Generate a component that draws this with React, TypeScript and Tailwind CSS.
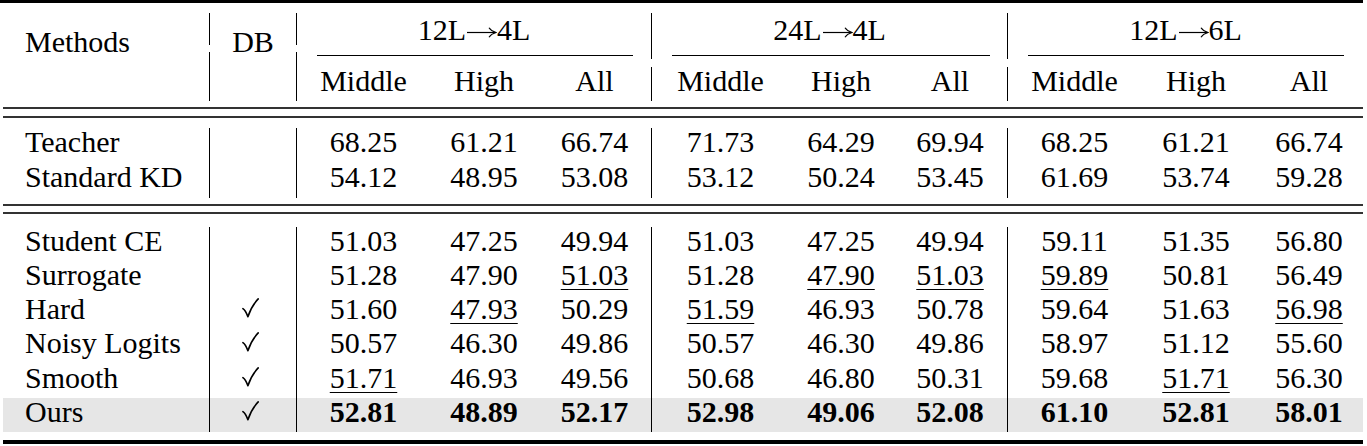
import React from "react"
import clsx from "clsx"

const cols =
  "grid grid-cols-[206px_87px_134px_108px_113px_138px_104px_114px_134px_110px_112px]"

const groups = [
  ["12L", "4L"],
  ["24L", "4L"],
  ["12L", "6L"],
]
const subs = ["Middle", "High", "All"]

// "_" prefix = underlined (second best)
const top = [
  { name: "Teacher", vals: ["68.25", "61.21", "66.74", "71.73", "64.29", "69.94", "68.25", "61.21", "66.74"] },
  { name: "Standard KD", vals: ["54.12", "48.95", "53.08", "53.12", "50.24", "53.45", "61.69", "53.74", "59.28"] },
]

const bottom = [
  { name: "Student CE", db: false, vals: ["51.03", "47.25", "49.94", "51.03", "47.25", "49.94", "59.11", "51.35", "56.80"] },
  { name: "Surrogate", db: false, vals: ["51.28", "47.90", "_51.03", "51.28", "_47.90", "_51.03", "_59.89", "50.81", "56.49"] },
  { name: "Hard", db: true, vals: ["51.60", "_47.93", "50.29", "_51.59", "46.93", "50.78", "59.64", "51.63", "_56.98"] },
  { name: "Noisy Logits", db: true, vals: ["50.57", "46.30", "49.86", "50.57", "46.30", "49.86", "58.97", "51.12", "55.60"] },
  { name: "Smooth", db: true, vals: ["_51.71", "46.93", "49.56", "50.68", "46.80", "50.31", "59.68", "_51.71", "56.30"] },
]

const ours = ["52.81", "48.89", "52.17", "52.98", "49.06", "52.08", "61.10", "52.81", "58.01"]

const Arrow = () => (
  <svg width="31" height="15" viewBox="0 0 31 15" className="inline align-baseline">
    <path d="M1 7.5 H29.5" stroke="black" strokeWidth="1.2" />
    <path d="M23 2.8 Q25 6 30 7.5 Q25 9 23 12.2" fill="none" stroke="black" strokeWidth="1.2" />
  </svg>
)

const Check = () => (
  <svg width="17" height="20" viewBox="0 0 17 20" className="-translate-x-[3px]">
    <path
      d="M0.9 10.6 Q3.6 12.4 5.9 18.8 Q9.2 8.2 16.2 0.9"
      fill="none"
      stroke="black"
      strokeWidth="1.6"
      strokeLinecap="round"
      strokeLinejoin="round"
    />
  </svg>
)

const Row = ({
  name,
  vals,
  db,
  h,
  bold,
}: {
  name: string
  vals: string[]
  db?: boolean
  h: string
  bold?: boolean
}) => (
  <div className={clsx(cols, h, "leading-[34px]", bold && "bg-[#e6e6e6]")}>
    <div className="pl-[22px]">
      <span className="inline-block -translate-y-[3px]">{name}</span>
    </div>
    <div className="border-l border-black flex justify-center items-start pt-[3px]">{db && <Check />}</div>
    {vals.map((v, i) => {
      const under = v.startsWith("_")
      return (
        <div key={i} className={clsx("text-center", i % 3 === 0 && "border-l border-black", i === 8 && "pl-1")}>
          <span
            className={clsx(
              "inline-block -translate-y-[3px]",
              under && "underline decoration-1 underline-offset-[4px]",
              bold && "font-bold"
            )}
          >
            {under ? v.slice(1) : v}
          </span>
        </div>
      )
    })}
  </div>
)

const Rule = () => <div className="h-[2px] bg-[#333]" />

export default function App() {
  return (
    <div className="w-[1367px] h-[446px] bg-white text-black text-[30px] font-['Liberation_Serif',serif] overflow-hidden">
      <div className="h-[3px] w-[1363px] bg-black" />
      <div className="ml-[3px] w-[1360px]">
        <div className="h-[10px]" />

        {/* header row 1 */}
        <div className={clsx(cols, "h-[35px] leading-[34px]")}>
          <div className="pl-[22px] pt-[12px]">Methods</div>
          <div className="border-l border-black h-[32px] text-center pt-[12px]">DB</div>
          {groups.map((g, i) => (
            <div key={i} className={clsx("col-span-3 border-l border-black text-center", i === 0 && "h-[32px]")}>
              {g[0]}
              <Arrow />
              {g[1]}
            </div>
          ))}
        </div>

        {/* cmidrules */}
        <div className={clsx(cols, "h-[16px]")}>
          <div />
          <div className="border-l border-black mt-[4px]" />
          <div className="col-span-3 border-l border-black mt-[4px] pt-[3px]">
            <div className="h-px bg-black ml-5 mr-[18px]" />
          </div>
          <div className="col-span-3 pt-[7px]">
            <div className="h-px bg-black ml-[21px] mr-[17px]" />
          </div>
          <div className="col-span-3 pt-[7px]">
            <div className="h-px bg-black ml-[21px] mr-[19px]" />
          </div>
        </div>

        {/* header row 2 */}
        <div className={clsx(cols, "h-[36px] leading-[34px]")}>
          <div />
          <div className="border-l border-black" />
          {groups.map((g, gi) =>
            subs.map((s, si) => (
              <div
                key={gi + s}
                className={clsx(
                  "text-center",
                  si === 0 && "border-l border-black",
                  si === 0 && gi > 0 && "mt-[3px]",
                  gi === 2 && si === 2 && "pl-1"
                )}
              >
                <span className={clsx("inline-block", si === 0 && gi > 0 && "-translate-y-[3px]")}>{s}</span>
              </div>
            ))
          )}
        </div>

        <div className="h-[7px]" />
        <Rule />
        <div className="h-[7px]" />
        <Rule />
        <div className="h-[10px]" />

        {top.map((r) => (
          <Row key={r.name} name={r.name} vals={r.vals} h="h-[35px]" />
        ))}

        <div className="h-[6px]" />
        <Rule />
        <div className="h-[6px]" />
        <Rule />
        <div className="h-[13px]" />

        {bottom.map((r) => (
          <Row key={r.name} name={r.name} vals={r.vals} db={r.db} h="h-[34.17px]" />
        ))}
        <Row name="Ours" vals={ours} db h="h-[34.17px]" bold />

        <div className="h-[8px]" />
        <div className="h-[4px] bg-black" />
      </div>
    </div>
  )
}
